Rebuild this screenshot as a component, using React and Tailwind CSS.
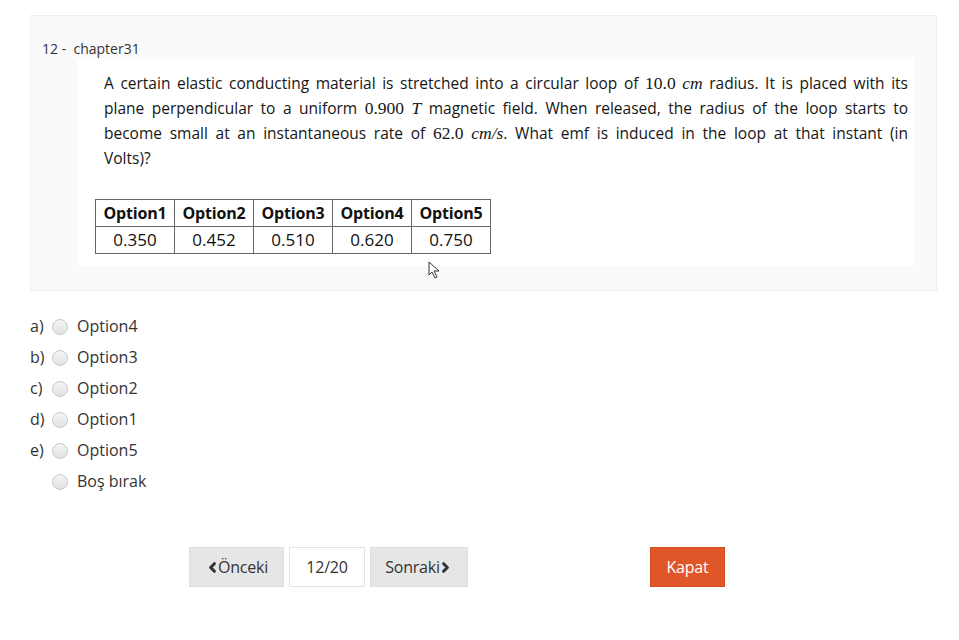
import { ChevronLeft, ChevronRight } from 'lucide-react';

const options = [
  { key: 'a)', label: 'Option4' },
  { key: 'b)', label: 'Option3' },
  { key: 'c)', label: 'Option2' },
  { key: 'd)', label: 'Option1' },
  { key: 'e)', label: 'Option5' },
  { key: '', label: 'Boş bırak' },
];

const cols = [
  ['Option1', '0.350'],
  ['Option2', '0.452'],
  ['Option3', '0.510'],
  ['Option4', '0.620'],
  ['Option5', '0.750'],
];

function M({ children }) {
  return <span className="font-['Liberation_Serif',serif] text-[17.5px]">{children}</span>;
}
function I({ children }) {
  return <span className="font-['Liberation_Serif',serif] italic text-[17.5px]">{children}</span>;
}

// satırı iki yana yasla (son satır dahil)
function Line({ children }) {
  return <div className="text-justify [text-align-last:justify] whitespace-nowrap">{children}</div>;
}

function Radio() {
  return (
    <span className="inline-block h-[16px] w-[16px] rounded-full border border-[#c9c9c9] bg-gradient-to-b from-[#f4f4f4] to-[#e2e2e2]" />
  );
}

export default function App() {
  return (
    <div className="min-h-screen bg-white pt-[15px] font-['Open_Sans',sans-serif] text-[#333]">
      {/* Soru paneli */}
      <div className="ml-[30px] w-[907px] h-[276px] border border-[#efefef] bg-[#fafafa] pt-[23px]">
        <div className="pl-[11px] text-[14px] leading-[20px] text-[#333]">
          12 -&nbsp; chapter31
        </div>
        <div className="ml-[46px] w-[837px] h-[207px] bg-white pl-[27px] pr-[6px] pt-[12px]">
          <div className="text-[15.5px] leading-[25px] text-[#161616] font-['Open_Sans',sans-serif]">
            <Line>A certain elastic conducting material is stretched into a circular loop of <M>10.0</M> <I>cm</I> radius. It is placed with its</Line>
            <Line>plane perpendicular to a uniform <M>0.900</M> <I>T</I> magnetic field. When released, the radius of the loop starts to</Line>
            <Line>become small at an instantaneous rate of <M>62.0</M> <I>cm/s</I>. What emf is induced in the loop at that instant (in</Line>
            <div>Volts)?</div>
          </div>
          <div className="relative">
            <table className="mt-[28px] ml-[-9px] border-collapse font-['Open_Sans',sans-serif] text-[#111]">
              <tbody>
                <tr>
                  {cols.map(([h]) => (
                    <th key={h} className="h-[27px] w-[79px] border border-[#666] text-[16px] font-bold px-0 tracking-[-0.2px]">{h}</th>
                  ))}
                </tr>
                <tr>
                  {cols.map(([h, v]) => (
                    <td key={h} className="h-[27px] w-[79px] border border-[#666] text-center text-[17px] leading-[20px]">{v}</td>
                  ))}
                </tr>
              </tbody>
            </table>
            <svg className="absolute left-[324px] top-[62px]" width="13" height="18" viewBox="0 0 13 18">
              <path d="M1 1 L1 14 L4 11 L7 17 L9 16 L6 10 L11 10 Z" fill="white" stroke="#333" strokeWidth="1" strokeLinejoin="round" />
            </svg>
          </div>
        </div>
      </div>

      {/* Şıklar */}
      <div className="mt-[25px] flex flex-col gap-[10px] text-[16px] leading-[21px] text-[#333]">
        {options.map((o) => (
          <div key={o.label} className="flex items-center">
            <span className="w-[22px] ml-[30px] text-[#333]">{o.key}</span>
            <Radio />
            <span className="ml-[9px]">{o.label}</span>
          </div>
        ))}
      </div>

      {/* Gezinme */}
      <div className="mt-[55px] flex items-center font-['Open_Sans',sans-serif] text-[16px] text-[#333]">
        <div className="ml-[189px] flex items-center gap-[5px]">
          <button className="flex h-[40px] w-[95px] items-center justify-center bg-[#e6e6e6] border border-[#ddd] tracking-[-0.2px]">
            <ChevronLeft size={15} strokeWidth={5} className="-mr-[2px]" />
            Önceki
          </button>
          <div className="flex h-[40px] w-[76px] items-center justify-center bg-white border border-[#e3e3e3] tracking-[-0.2px]">12/20</div>
          <button className="flex h-[40px] w-[98px] items-center justify-center bg-[#e6e6e6] border border-[#ddd] tracking-[-0.2px]">
            Sonraki
            <ChevronRight size={15} strokeWidth={5} className="-ml-[2px]" />
          </button>
        </div>
        <button className="ml-[182px] flex h-[40px] w-[75px] items-center justify-center bg-[#df5729] text-white border border-[#d04e22] tracking-[-0.2px]">
          Kapat
        </button>
      </div>
    </div>
  );
}
